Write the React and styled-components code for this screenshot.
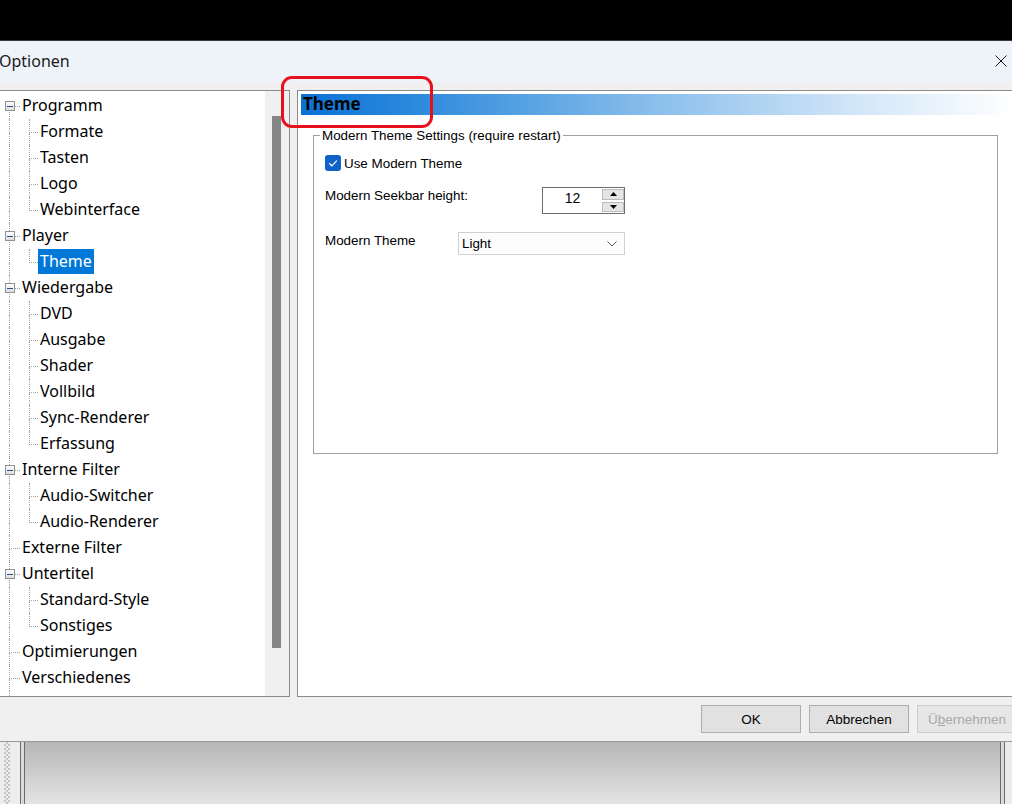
import React from "react"
import styled, { createGlobalStyle } from "styled-components"

// ** Data
const tree = [
  { label: "Programm", children: ["Formate", "Tasten", "Logo", "Webinterface"] },
  { label: "Player", children: ["Theme"] },
  { label: "Wiedergabe", children: ["DVD", "Ausgabe", "Shader", "Vollbild", "Sync-Renderer", "Erfassung"] },
  { label: "Interne Filter", children: ["Audio-Switcher", "Audio-Renderer"] },
  { label: "Externe Filter" },
  { label: "Untertitel", children: ["Standard-Style", "Sonstiges"] },
  { label: "Optimierungen" },
  { label: "Verschiedenes" }
]
const selected = "Theme"

const GlobalStyle = createGlobalStyle`
  html, body {
    margin: 0;
    padding: 0;
    background: #000;
    overflow: hidden;
  }
  * { box-sizing: border-box; }
`

const Screen = styled.div`
  position: relative;
  width: 1012px;
  height: 804px;
  overflow: hidden;
  display: flex;
  flex-direction: column;
  background: #000;
`

const TopBand = styled.div`
  flex: none;
  height: 41px;
  background: #000;
  border-bottom: 1px solid #3a3a3a;
`

const Dialog = styled.div`
  flex: none;
  width: 1028px;
  margin-left: -4px;
  display: flex;
  flex-direction: column;
  background: #f0f0f0;
  border-bottom: 1px solid #9a9a9a;
`

const TitleBar = styled.div`
  height: 41px;
  display: flex;
  align-items: center;
  justify-content: space-between;
  padding: 0 0 2px 3px;
  background: #eef2f9;
  font-family: "Noto Sans", sans-serif;
  font-size: 16px;
  color: #1b1b1b;
`

const CloseButton = styled.div`
  width: 46px;
  height: 39px;
  display: flex;
  align-items: center;
  justify-content: center;
`

const Body = styled.div`
  padding: 8px 7px 0 3px;
`

const Panels = styled.div`
  display: flex;
  gap: 7px;
  height: 607px;
`

const TreePanel = styled.div`
  flex: none;
  width: 291px;
  display: flex;
  background: #fff;
  border: 1px solid #8c8c8c;
`

const TreeArea = styled.div`
  flex: 1;
  display: flex;
  flex-direction: column;
  padding-top: 2px;
  overflow: hidden;
  font-family: "Noto Sans", sans-serif;
  font-size: 16px;
  color: #000;
`

const Row = styled.div`
  flex: none;
  display: flex;
  align-items: flex-start;
  height: 26px;
`

const Guide = styled.div`
  position: relative;
  flex: none;
  width: ${(p) => p.$w}px;
  height: 26px;
  display: flex;
  flex-direction: column;
`

const GuideTop = styled.div`
  height: 14px;
  margin-left: ${(p) => p.$x}px;
  border-left: ${(p) => (p.$line ? "1px dotted #a0a0a0" : "none")};
  border-bottom: ${(p) => (p.$arm ? "1px dotted #a0a0a0" : "none")};
`

const GuideBottom = styled.div`
  flex: 1;
  margin-left: ${(p) => p.$x}px;
  border-left: ${(p) => (p.$line ? "1px dotted #a0a0a0" : "none")};
`

const Expander = styled.div`
  position: absolute;
  left: 5px;
  top: 8px;
  width: 10px;
  height: 10px;
  border: 1px solid #919191;
  background: linear-gradient(#ffffff, #dedede);
  display: flex;
  align-items: center;
  justify-content: center;
  &::after {
    content: "";
    width: 6px;
    height: 1px;
    background: #2d4f8f;
  }
`

const TreeLabel = styled.div`
  height: 25px;
  line-height: 25px;
  padding: 0 2px;
  white-space: nowrap;
  background: ${(p) => (p.$active ? "#0078d7" : "transparent")};
  color: ${(p) => (p.$active ? "#fff" : "#000")};
`

const TreeTail = styled.div`
  flex: 1;
  margin-left: 9px;
  border-left: 1px dotted #a0a0a0;
`

const ScrollTrack = styled.div`
  flex: none;
  width: 24px;
  padding-left: 7px;
  background: #f0f0f0;
`

const ScrollThumb = styled.div`
  width: 9px;
  margin-top: 25px;
  background: #858585;
`

const PagePanel = styled.div`
  flex: 1;
  padding: 3px;
  background: #fff;
  border: 1px solid #8c8c8c;
  font-family: "Liberation Sans", Arial, sans-serif;
  font-size: 13.4px;
  color: #000;
`

const PageHeader = styled.div`
  height: 21px;
  line-height: 19px;
  padding-left: 2px;
  background: linear-gradient(to right, #0a72d5 0%, #2a88dc 15%, #8bbfec 50%, #d2e6f8 78%, #ffffff 100%);
  font-family: "Noto Sans", sans-serif;
  font-weight: 700;
  font-size: 17px;
  color: #000;
`

const GroupBox = styled.fieldset`
  width: 685px;
  height: 326px;
  margin: 13px 0 0 12px;
  padding: 0 11px;
  border: 1px solid #a0a0a0;
`

const Legend = styled.legend`
  margin-left: -5px;
  padding: 0 2px;
  line-height: 15px;
`

const CheckRow = styled.label`
  display: flex;
  align-items: center;
  gap: 3px;
  height: 16px;
  margin-top: 12px;
`

const CheckBox = styled.span`
  width: 16px;
  height: 16px;
  border-radius: 3px;
  background: #0f62c7;
  display: flex;
  align-items: center;
  justify-content: center;
`

const FieldRow = styled.div`
  display: flex;
  align-items: flex-start;
  margin-top: ${(p) => p.$gap}px;
`

const FieldLabel = styled.div`
  flex: none;
  width: ${(p) => p.$w}px;
  line-height: 16px;
  padding-top: ${(p) => p.$pt || 0}px;
`

const Spin = styled.div`
  width: 83px;
  height: 27px;
  display: flex;
  border: 1px solid #6d6d6d;
`

const SpinValue = styled.div`
  flex: 1;
  display: flex;
  align-items: center;
  justify-content: center;
  padding-bottom: 5px;
  font-size: 14px;
`

const SpinButtons = styled.div`
  flex: none;
  width: 22px;
  display: flex;
  flex-direction: column;
  gap: 2px;
  padding: 1px 0;
`

const SpinButton = styled.div`
  height: 11px;
  display: flex;
  align-items: center;
  justify-content: center;
  background: #e5e5e5;
  border: 1px solid #bcbcbc;
`

const Combo = styled.div`
  width: 167px;
  height: 23px;
  display: flex;
  align-items: center;
  justify-content: space-between;
  padding: 0 7px 0 3px;
  background: #fdfdfd;
  border: 1px solid #d0d0d0;
`

const Footer = styled.div`
  height: 44px;
  display: flex;
  justify-content: flex-end;
  gap: 8px;
  padding: 8px 7px 0 0;
`

const Button = styled.div`
  width: 100px;
  height: 28px;
  display: flex;
  align-items: center;
  justify-content: center;
  font-family: "Liberation Sans", Arial, sans-serif;
  font-size: 13.5px;
  background: ${(p) => (p.$disabled ? "#e6e6e6" : "#e1e1e1")};
  border: 1px solid ${(p) => (p.$disabled ? "#cccccc" : "#adadad")};
  color: ${(p) => (p.$disabled ? "#a8a8a8" : "#000")};
`

const BackWindow = styled.div`
  flex: 1;
  display: flex;
`

const DotStrip = styled.div`
  flex: none;
  width: 20px;
  padding-left: 4px;
  background: #ededed;
  &::before {
    content: "";
    display: block;
    width: 6px;
    height: 100%;
    background-image: conic-gradient(#c4c4c4 25%, transparent 0 50%, #c4c4c4 0 75%, transparent 0);
    background-size: 4px 4px;
  }
`

const FrameEdge = styled.div`
  flex: none;
  width: 5px;
  border-left: 1px solid #6b6b6b;
  border-right: 1px solid #6b6b6b;
  background: #dadada;
`

const BackContent = styled.div`
  flex: 1;
  background: linear-gradient(#b6b6b6, #e4e4e4);
`

const BackSide = styled.div`
  flex: none;
  width: 7px;
  background: #ececec;
`

const Highlight = styled.div`
  position: absolute;
  left: 281px;
  top: 76px;
  width: 152px;
  height: 52px;
  border: 3px solid #e8101c;
  border-radius: 11px;
  pointer-events: none;
`

const RootRow = ({ item, first }) => (
  <Row>
    <Guide $w={20}>
      <GuideTop $x={9} $line={!first} $arm />
      <GuideBottom $x={9} $line />
      {item.children && <Expander />}
    </Guide>
    <TreeLabel $active={item.label === selected}>{item.label}</TreeLabel>
  </Row>
)

const ChildRow = ({ label, last }) => (
  <Row>
    <Guide $w={19}>
      <GuideTop $x={9} $line />
      <GuideBottom $x={9} $line />
    </Guide>
    <Guide $w={19}>
      <GuideTop $x={10} $line $arm />
      <GuideBottom $x={10} $line={!last} />
    </Guide>
    <TreeLabel $active={label === selected}>{label}</TreeLabel>
  </Row>
)

const Tree = () => (
  <TreeArea>
    {tree.map((item, i) => (
      <React.Fragment key={item.label}>
        <RootRow item={item} first={i === 0} />
        {(item.children || []).map((c, j) => (
          <ChildRow key={c} label={c} last={j === item.children.length - 1} />
        ))}
      </React.Fragment>
    ))}
    <TreeTail />
  </TreeArea>
)

const Triangle = ({ down }) => (
  <svg width="7" height="4" viewBox="0 0 7 4">
    <polygon points={down ? "0,0 7,0 3.5,4" : "0,4 7,4 3.5,0"} fill="#000" />
  </svg>
)

export default function App() {
  return (
    <Screen>
      <GlobalStyle />
      <TopBand />
      <Dialog>
        <TitleBar>
          <span>Optionen</span>
          <CloseButton>
            <svg width="12" height="12" viewBox="0 0 12 12">
              <path d="M0.5 0.5 L11.5 11.5 M11.5 0.5 L0.5 11.5" stroke="#1a1a1a" strokeWidth="1" />
            </svg>
          </CloseButton>
        </TitleBar>
        <Body>
          <Panels>
            <TreePanel>
              <Tree />
              <ScrollTrack>
                <ScrollThumb style={{ height: 532 }} />
              </ScrollTrack>
            </TreePanel>
            <PagePanel>
              <PageHeader>Theme</PageHeader>
              <GroupBox>
                <Legend>Modern Theme Settings (require restart)</Legend>
                <CheckRow>
                  <CheckBox>
                    <svg width="16" height="16" viewBox="0 0 16 16">
                      <path d="M4.2 8.3 L6.8 10.8 L11.8 5.6" stroke="#fff" strokeWidth="1.2" fill="none" />
                    </svg>
                  </CheckBox>
                  Use Modern Theme
                </CheckRow>
                <FieldRow $gap={16}>
                  <FieldLabel $w={217} $pt={1}>
                    Modern Seekbar height:
                  </FieldLabel>
                  <Spin>
                    <SpinValue>12</SpinValue>
                    <SpinButtons>
                      <SpinButton>
                        <Triangle />
                      </SpinButton>
                      <SpinButton>
                        <Triangle down />
                      </SpinButton>
                    </SpinButtons>
                  </Spin>
                </FieldRow>
                <FieldRow $gap={18}>
                  <FieldLabel $w={133} $pt={1}>
                    Modern Theme
                  </FieldLabel>
                  <Combo>
                    <span>Light</span>
                    <svg width="10" height="6" viewBox="0 0 10 6">
                      <path d="M0.5 0.5 L5 5 L9.5 0.5" stroke="#555" strokeWidth="1" fill="none" />
                    </svg>
                  </Combo>
                </FieldRow>
              </GroupBox>
            </PagePanel>
          </Panels>
        </Body>
        <Footer>
          <Button>OK</Button>
          <Button>Abbrechen</Button>
          <Button $disabled>
            <span>
              Ü<u>b</u>ernehmen
            </span>
          </Button>
        </Footer>
      </Dialog>
      <BackWindow>
        <DotStrip />
        <FrameEdge />
        <BackContent />
        <FrameEdge />
        <BackSide />
      </BackWindow>
      <Highlight />
    </Screen>
  )
}
